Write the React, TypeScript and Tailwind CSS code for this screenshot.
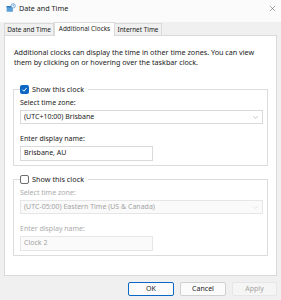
import { ChevronDown, X } from "lucide-react";

function Field({ label, value, disabled, wide }: { label: string; value: string; disabled?: boolean; wide?: boolean }) {
  return (
    <div className="flex flex-col">
      <div className={`text-[7px] leading-[10px] ${disabled ? "text-[#ababab]" : "text-[#1b1b1b]"}`}>{label}</div>
      <div
        className={`mt-[2px] flex items-center justify-between px-[3px] border text-[7px] ${
          wide ? "w-[243px] h-[14px]" : "w-[133px] h-[15px]"
        } ${disabled ? "border-[#e6e6e6] bg-[#fafafa] text-[#a3a3a3]" : "border-[#dadada] bg-white text-[#1b1b1b]"}`}
      >
        <span>{value}</span>
        {wide && <ChevronDown size={7} strokeWidth={1.5} className={disabled ? "text-[#c8c8c8]" : "text-[#707070]"} />}
      </div>
    </div>
  );
}

function ClockGroup({ checked, zone, name }: { checked: boolean; zone: string; name: string }) {
  const disabled = !checked;
  return (
    <div className="relative mx-[8px] border border-[#dcdcdc] px-[6px] pt-[8px] pb-[4px]">
      <div className="absolute left-[6px] -top-[6px] flex items-center gap-[3px] bg-white pr-[4px]">
        {checked ? (
          <div className="w-[9px] h-[9px] rounded-[2px] bg-[#0a68c4] flex items-center justify-center">
            <svg width="7" height="7" viewBox="0 0 10 10" fill="none" stroke="white" strokeWidth="1.4">
              <polyline points="2 5.2 4.2 7.4 8 2.8" />
            </svg>
          </div>
        ) : (
          <div className="w-[9px] h-[9px] rounded-[2px] border border-[#6e6e6e] bg-white" />
        )}
        <span className="text-[7.3px] leading-[10px] text-[#1b1b1b]">Show this clock</span>
      </div>
      <div className="flex flex-col gap-[10px]">
        <Field label="Select time zone:" value={zone} disabled={disabled} wide />
        <Field label="Enter display name:" value={name} disabled={disabled} />
      </div>
    </div>
  );
}

export default function App() {
  return (
    <div className="w-[281px] h-[300px] bg-[#f0f0f0] flex flex-col overflow-hidden" style={{ fontFamily: '"Noto Sans", "Open Sans", sans-serif' }}>
      <div className="h-[22px] bg-[#fbfbfb] flex items-start justify-between pt-[2px] pl-[6px] pr-[4px]">
        <div className="flex items-center gap-[3px] h-[12px]">
          <svg width="10" height="10" viewBox="0 0 16 16">
            <rect x="1" y="5" width="10" height="9" fill="#5aa0d8" />
            <rect x="1" y="5" width="10" height="2" fill="#2f6fb0" />
            <circle cx="11.5" cy="4.5" r="3.5" fill="#e8f2fb" stroke="#4a8cc8" strokeWidth="1" />
            <path d="M11.5 2.5 V4.5 H13" stroke="#2f6fb0" strokeWidth="0.8" fill="none" />
          </svg>
          <span className="text-[7.2px] text-[#1b1b1b]">Date and Time</span>
        </div>
        <div className="h-[12px] flex items-center">
          <X size={9} strokeWidth={1.1} className="text-[#333]" />
        </div>
      </div>
      <div className="flex items-end pl-[4px] h-[13px] relative z-10">
        <div className="w-[50px] h-[12px] border border-b-0 border-[#dadada] bg-[#f0f0f0] text-[6.4px] leading-[11px] text-center text-[#1b1b1b]">Date and Time</div>
        <div className="w-[61px] h-[14px] -mb-[1px] border border-b-0 border-[#dadada] bg-white text-[6.4px] leading-[12px] text-center text-[#1b1b1b]">Additional Clocks</div>
        <div className="w-[47px] h-[12px] border border-b-0 border-l-0 border-[#dadada] bg-[#f0f0f0] text-[6.4px] leading-[11px] text-center text-[#1b1b1b]">Internet Time</div>
      </div>
      <div className="mx-[4px] h-[241px] border border-[#dadada] bg-white flex flex-col">
        <p className="px-[9px] pt-[11px] text-[7.2px] leading-[10px] text-[#1b1b1b]">
          Additional clocks can display the time in other time zones. You can view them by clicking on or hovering over the taskbar clock.
        </p>
        <div className="mt-[22px]">
          <ClockGroup checked zone="(UTC+10:00) Brisbane" name="Brisbane, AU" />
        </div>
        <div className="mt-[13px]">
          <ClockGroup checked={false} zone="(UTC-05:00) Eastern Time (US & Canada)" name="Clock 2" />
        </div>
      </div>
      <div className="flex justify-end gap-[6px] pr-[4px] mt-[6px]">
        <div className="w-[46px] h-[14px] border border-[#0a68c4] rounded-[2px] bg-[#fbfbfb] flex items-center justify-center text-[7px] text-[#1b1b1b]">OK</div>
        <div className="w-[46px] h-[14px] border border-[#d0d0d0] rounded-[2px] bg-[#fbfbfb] flex items-center justify-center text-[7px] text-[#1b1b1b]">Cancel</div>
        <div className="w-[45px] h-[14px] border border-[#e6e6e6] rounded-[2px] bg-[#f5f5f5] flex items-center justify-center text-[7px] text-[#a3a3a3]">Apply</div>
      </div>
    </div>
  );
}
